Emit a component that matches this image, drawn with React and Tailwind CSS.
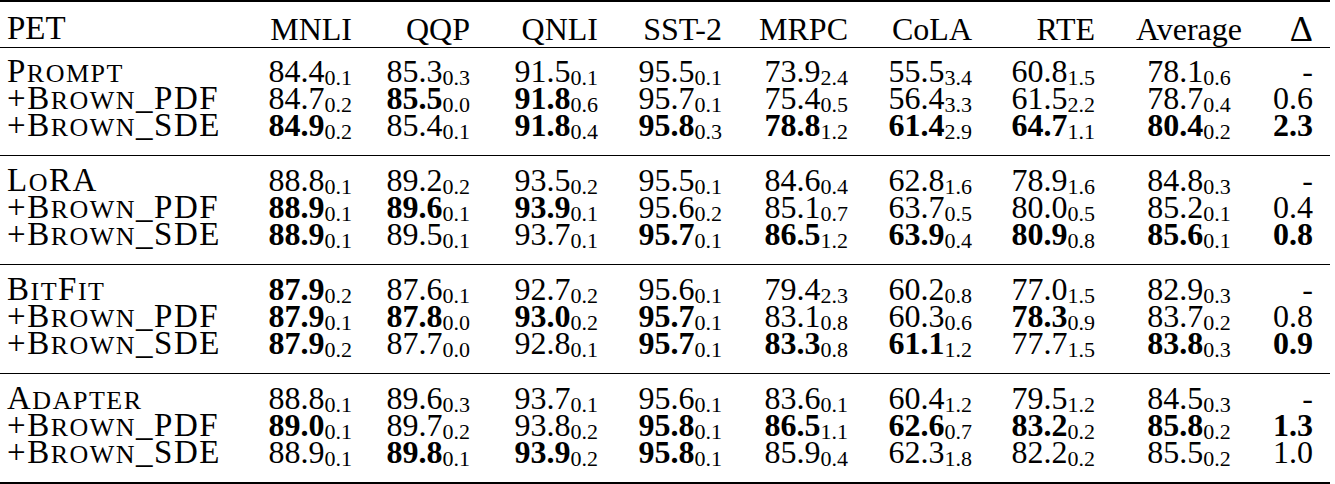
const COLS = ["MNLI", "QQP", "QNLI", "SST-2", "MRPC", "CoLA", "RTE", "Average"];

// "*" = bold, value_sub
const GROUPS = [
  {
    name: "Prompt",
    rows: [
      ["84.4_0.1", "85.3_0.3", "91.5_0.1", "95.5_0.1", "73.9_2.4", "55.5_3.4", "60.8_1.5", "78.1_0.6", "-"],
      ["84.7_0.2", "*85.5_0.0", "*91.8_0.6", "95.7_0.1", "75.4_0.5", "56.4_3.3", "61.5_2.2", "78.7_0.4", "0.6"],
      ["*84.9_0.2", "85.4_0.1", "*91.8_0.4", "*95.8_0.3", "*78.8_1.2", "*61.4_2.9", "*64.7_1.1", "*80.4_0.2", "*2.3"],
    ],
  },
  {
    name: "LoRA",
    rows: [
      ["88.8_0.1", "89.2_0.2", "93.5_0.2", "95.5_0.1", "84.6_0.4", "62.8_1.6", "78.9_1.6", "84.8_0.3", "-"],
      ["*88.9_0.1", "*89.6_0.1", "*93.9_0.1", "95.6_0.2", "85.1_0.7", "63.7_0.5", "80.0_0.5", "85.2_0.1", "0.4"],
      ["*88.9_0.1", "89.5_0.1", "93.7_0.1", "*95.7_0.1", "*86.5_1.2", "*63.9_0.4", "*80.9_0.8", "*85.6_0.1", "*0.8"],
    ],
  },
  {
    name: "BitFit",
    rows: [
      ["*87.9_0.2", "87.6_0.1", "92.7_0.2", "95.6_0.1", "79.4_2.3", "60.2_0.8", "77.0_1.5", "82.9_0.3", "-"],
      ["*87.9_0.1", "*87.8_0.0", "*93.0_0.2", "*95.7_0.1", "83.1_0.8", "60.3_0.6", "*78.3_0.9", "83.7_0.2", "0.8"],
      ["*87.9_0.2", "87.7_0.0", "92.8_0.1", "*95.7_0.1", "*83.3_0.8", "*61.1_1.2", "77.7_1.5", "*83.8_0.3", "*0.9"],
    ],
  },
  {
    name: "Adapter",
    rows: [
      ["88.8_0.1", "89.6_0.3", "93.7_0.1", "95.6_0.1", "83.6_0.1", "60.4_1.2", "79.5_1.2", "84.5_0.3", "-"],
      ["*89.0_0.1", "89.7_0.2", "93.8_0.2", "*95.8_0.1", "*86.5_1.1", "*62.6_0.7", "*83.2_0.2", "*85.8_0.2", "*1.3"],
      ["88.9_0.1", "*89.8_0.1", "*93.9_0.2", "*95.8_0.1", "85.9_0.4", "62.3_1.8", "82.2_0.2", "85.5_0.2", "1.0"],
    ],
  },
];

const GRID = "grid grid-cols-[232px_120px_118px_128px_124px_126px_124px_123px_188px_47px]";

// small caps by hand: lowercase letters drawn as smaller capitals
function SmallCaps({ text }) {
  return (
    <span className="tracking-[1.5px]">
      {text.split("").map((ch, i) =>
        /[a-z]/.test(ch) ? (
          <span key={i} className="text-[26px]">{ch.toUpperCase()}</span>
        ) : (
          <span key={i}>{ch}</span>
        )
      )}
    </span>
  );
}

function Cell({ v, center }) {
  const bold = v.startsWith("*");
  const [main, sub] = v.replace("*", "").split("_");
  return (
    <div className={`flex whitespace-nowrap ${center ? "justify-center" : "justify-end"}`}>
      <span className={bold ? "font-bold" : ""}>{main}</span>
      {sub && <span className="relative top-[6px] text-[22px]">{sub}</span>}
    </div>
  );
}

function Row({ label, cells }) {
  return (
    <div className={`${GRID} h-[27px] leading-[27px]`}>
      <div className="pl-[7px] whitespace-nowrap text-[33px]">
        <SmallCaps text={label} />
      </div>
      {cells.slice(0, 8).map((v, i) => (
        <Cell key={i} v={v} center={i === 7} />
      ))}
      <div className="pr-[17px]">
        <Cell v={cells[8]} />
      </div>
    </div>
  );
}

export default function App() {
  return (
    <div className="min-h-screen bg-white text-black font-['Liberation_Serif',serif] text-[32px]">
      <div className="w-[1330px] border-t-2 border-b-2 border-black">
        <div className={`${GRID} h-[46px] items-center pb-[7px] border-b border-black`}>
          <div className="pl-[7px] text-[33px]">PET</div>
          {COLS.map((c, i) => (
            <div key={c} className={i === 7 ? "text-center" : "text-right"}>{c}</div>
          ))}
          <div className="pr-[17px] text-right text-[36px]">Δ</div>
        </div>
        {GROUPS.map((g, gi) => (
          <div key={g.name} className={`${gi === 0 ? "pt-[10px]" : "pt-[11px]"} pb-[16px] ${gi < 3 ? "border-b border-black" : ""}`}>
            <Row label={g.name} cells={g.rows[0]} />
            <Row label="+Brown_PDF" cells={g.rows[1]} />
            <Row label="+Brown_SDE" cells={g.rows[2]} />
          </div>
        ))}
      </div>
    </div>
  );
}
